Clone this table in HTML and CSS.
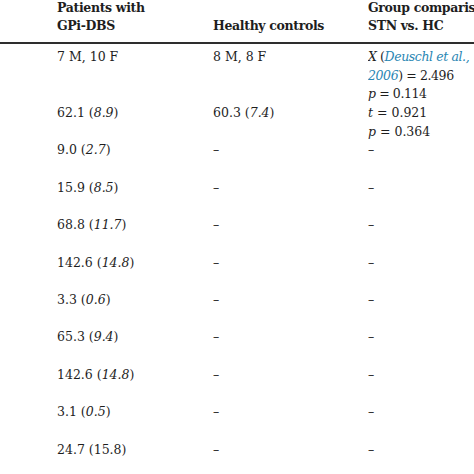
FILE: index.html
```html
<!DOCTYPE html>
<html>
<head>
<meta charset="utf-8">
<link rel="stylesheet" href="styles.css">
</head>
<body>
<div class="table">
  <div class="head">
    <div class="cell c1">Patients with<br>GPi-DBS</div>
    <div class="cell c2">Healthy controls</div>
    <div class="cell c3">Group comparison<br>STN vs. HC</div>
  </div>
  <div class="body">
    <div class="row">
      <div class="cell c1">7 M, 10 F</div>
      <div class="cell c2">8 M, 8 F</div>
      <div class="cell c3 tight"><i>X</i> (<a class="ref"><i>Deuschl et al.,<br>2006</i></a>) = 2.496<br><i>p</i> = 0.114</div>
    </div>
    <div class="row">
      <div class="cell c1">62.1 (<i>8.9</i>)</div>
      <div class="cell c2">60.3 (<i>7.4</i>)</div>
      <div class="cell c3"><i>t</i> = 0.921<br><i>p</i> = 0.364</div>
    </div>
    <div class="row">
      <div class="cell c1">9.0 (<i>2.7</i>)</div>
      <div class="cell c2">–</div>
      <div class="cell c3">–</div>
    </div>
    <div class="row">
      <div class="cell c1">15.9 (<i>8.5</i>)</div>
      <div class="cell c2">–</div>
      <div class="cell c3">–</div>
    </div>
    <div class="row">
      <div class="cell c1">68.8 (<i>11.7</i>)</div>
      <div class="cell c2">–</div>
      <div class="cell c3">–</div>
    </div>
    <div class="row">
      <div class="cell c1">142.6 (<i>14.8</i>)</div>
      <div class="cell c2">–</div>
      <div class="cell c3">–</div>
    </div>
    <div class="row">
      <div class="cell c1">3.3 (<i>0.6</i>)</div>
      <div class="cell c2">–</div>
      <div class="cell c3">–</div>
    </div>
    <div class="row">
      <div class="cell c1">65.3 (<i>9.4</i>)</div>
      <div class="cell c2">–</div>
      <div class="cell c3">–</div>
    </div>
    <div class="row">
      <div class="cell c1">142.6 (<i>14.8</i>)</div>
      <div class="cell c2">–</div>
      <div class="cell c3">–</div>
    </div>
    <div class="row">
      <div class="cell c1">3.1 (<i>0.5</i>)</div>
      <div class="cell c2">–</div>
      <div class="cell c3">–</div>
    </div>
    <div class="row">
      <div class="cell c1">24.7 (15.8)</div>
      <div class="cell c2">–</div>
      <div class="cell c3">–</div>
    </div>
  </div>
</div>
</body>
</html>
```

FILE: styles.css
```css
html, body {
  margin: 0;
  padding: 0;
  background: #ffffff;
  overflow: hidden;
}
body {
  font-family: "DejaVu Serif", "Liberation Serif", serif;
  font-size: 12.5px;
  line-height: 18.7px;
  color: #1e1e1e;
  width: 474px;
  height: 474px;
}
.table {
  margin-top: -1.5px;
  width: 474px;
}
.head {
  display: grid;
  grid-template-columns: 57px 156px 155px 106px;
  font-weight: bold;
  letter-spacing: -0.35px;
  padding-bottom: 6px;
  border-bottom: 2px solid #2e2e2e;
  align-items: end;
}
.head .c1 { grid-column: 2; }
.head .c2 { grid-column: 3; }
.head .c3 { grid-column: 4; }
.cell { white-space: nowrap; overflow: hidden; }
.tight { letter-spacing: -0.4px; }
.body { padding-top: 4px; }
.row {
  display: grid;
  grid-template-columns: 57px 156px 155px 106px;
  min-height: 37.4px;
}
.row .c1 { grid-column: 2; }
.row .c2 { grid-column: 3; }
.row .c3 { grid-column: 4; }
.ref { color: #2a86b3; text-decoration: none; }
```
